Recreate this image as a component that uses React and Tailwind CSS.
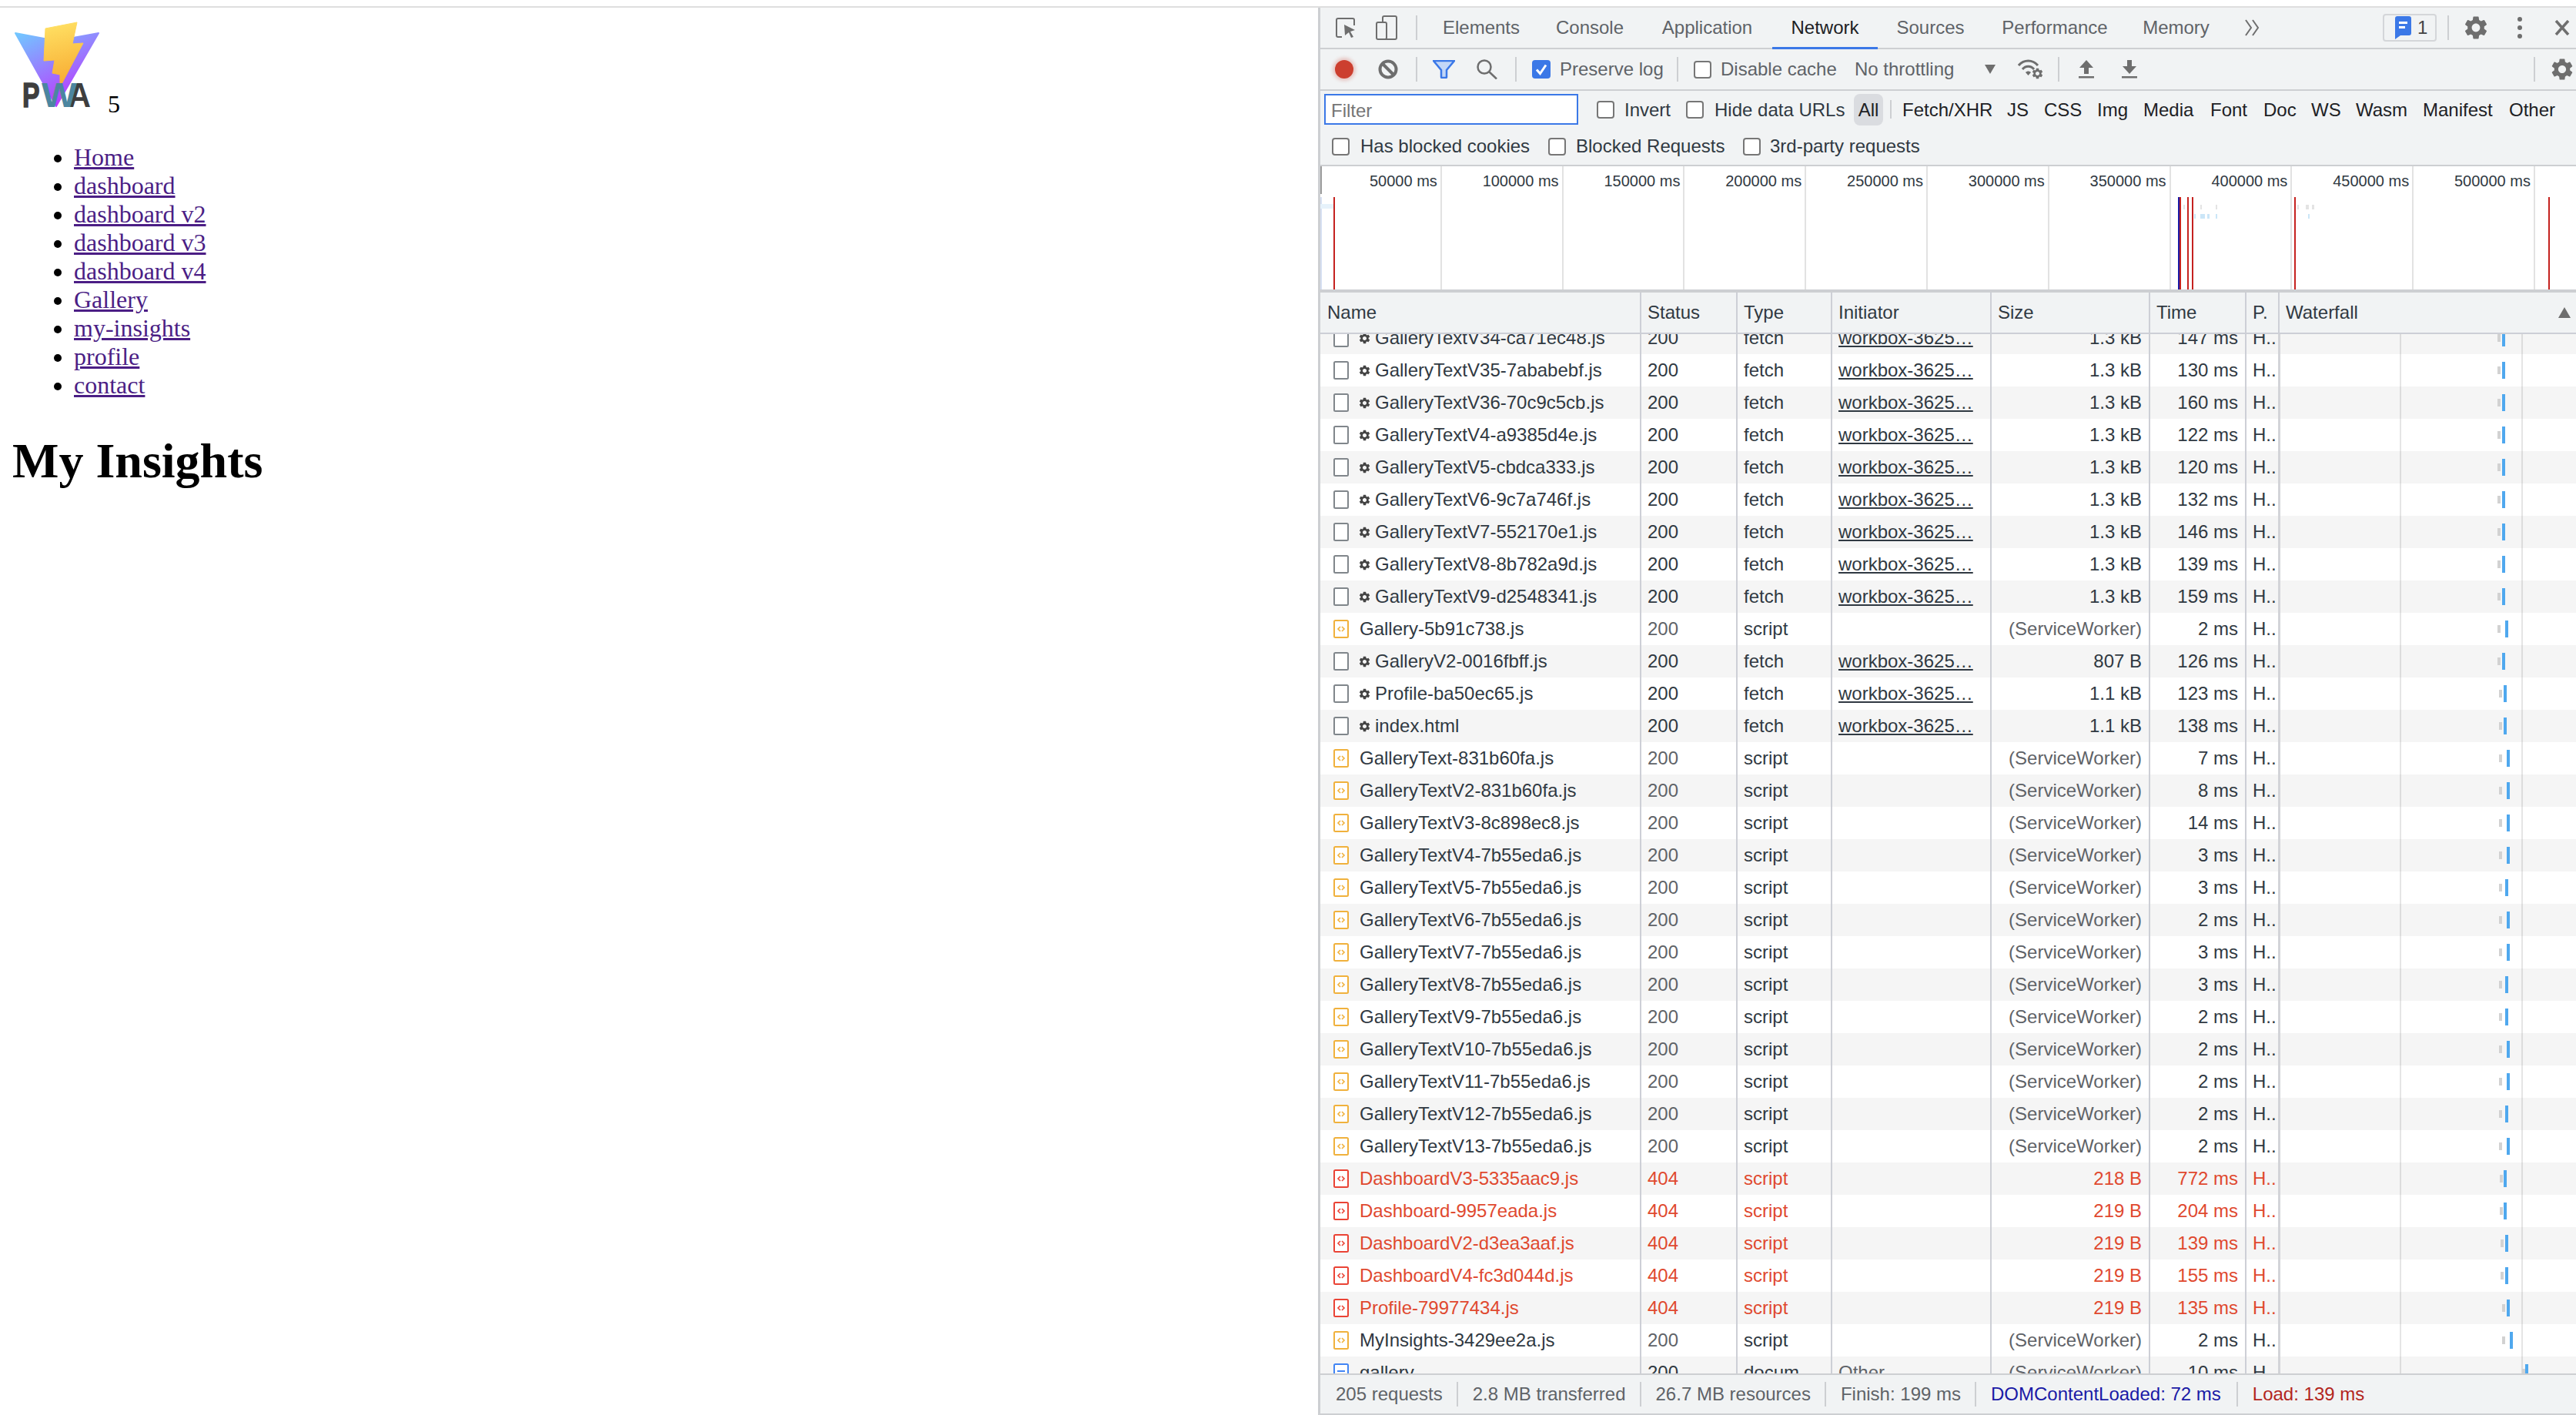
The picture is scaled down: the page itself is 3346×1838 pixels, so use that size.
import React from 'react';
import { MdSettings } from 'react-icons/md';

const COLS = 'grid grid-cols-[415px_125px_123px_207px_206px_125px_43px_1fr]';

const links = ['Home', 'dashboard', 'dashboard v2', 'dashboard v3', 'dashboard v4', 'Gallery', 'my-insights', 'profile', 'contact'];
const tabs = [
  ['Elements', 'w-[146px]'],
  ['Console', 'w-[136px]'],
  ['Application', 'w-[169px]'],
  ['Network', 'w-[137px]'],
  ['Sources', 'w-[137px]'],
  ['Performance', 'w-[186px]'],
  ['Memory', 'w-[129px]'],
];
const filters = [
  ['Fetch/XHR', 'w-[136px]'],
  ['JS', 'w-[48px]'],
  ['CSS', 'w-[69px]'],
  ['Img', 'w-[60px]'],
  ['Media', 'w-[87px]'],
  ['Font', 'w-[69px]'],
  ['Doc', 'w-[62px]'],
  ['WS', 'w-[58px]'],
  ['Wasm', 'w-[87px]'],
  ['Manifest', 'w-[112px]'],
  ['Other', 'w-[60px]'],
];
const ticks = ['50000', '100000', '150000', '200000', '250000', '300000', '350000', '400000', '450000', '500000'];

// name, kind, size, time, gray bar x, blue bar x (x measured from the waterfall column)
const fetchRow = (name, size, time, gray, blue) => ({ name, kind: 'fetch', size, time, gray, blue });
const scriptRow = (name, time, gray, blue) => ({ name, kind: 'script', size: '(ServiceWorker)', time, gray, blue });
const errRow = (name, size, time, gray, blue) => ({ name, kind: 'err', size, time, gray, blue });

const rows = [
  fetchRow('GalleryTextV34-ca71ec48.js', '1.3 kB', '147 ms', 283, 289),
  fetchRow('GalleryTextV35-7ababebf.js', '1.3 kB', '130 ms', 283, 289),
  fetchRow('GalleryTextV36-70c9c5cb.js', '1.3 kB', '160 ms', 283, 289),
  fetchRow('GalleryTextV4-a9385d4e.js', '1.3 kB', '122 ms', 283, 289),
  fetchRow('GalleryTextV5-cbdca333.js', '1.3 kB', '120 ms', 283, 289),
  fetchRow('GalleryTextV6-9c7a746f.js', '1.3 kB', '132 ms', 283, 289),
  fetchRow('GalleryTextV7-552170e1.js', '1.3 kB', '146 ms', 283, 289),
  fetchRow('GalleryTextV8-8b782a9d.js', '1.3 kB', '139 ms', 283, 289),
  fetchRow('GalleryTextV9-d2548341.js', '1.3 kB', '159 ms', 283, 289),
  scriptRow('Gallery-5b91c738.js', '2 ms', 283, 293),
  fetchRow('GalleryV2-0016fbff.js', '807 B', '126 ms', 283, 289),
  fetchRow('Profile-ba50ec65.js', '1.1 kB', '123 ms', 285, 291),
  fetchRow('index.html', '1.1 kB', '138 ms', 285, 291),
  scriptRow('GalleryText-831b60fa.js', '7 ms', 285, 295),
  scriptRow('GalleryTextV2-831b60fa.js', '8 ms', 285, 295),
  scriptRow('GalleryTextV3-8c898ec8.js', '14 ms', 285, 295),
  scriptRow('GalleryTextV4-7b55eda6.js', '3 ms', 285, 295),
  scriptRow('GalleryTextV5-7b55eda6.js', '3 ms', 285, 293),
  scriptRow('GalleryTextV6-7b55eda6.js', '2 ms', 285, 295),
  scriptRow('GalleryTextV7-7b55eda6.js', '3 ms', 285, 295),
  scriptRow('GalleryTextV8-7b55eda6.js', '3 ms', 285, 293),
  scriptRow('GalleryTextV9-7b55eda6.js', '2 ms', 285, 293),
  scriptRow('GalleryTextV10-7b55eda6.js', '2 ms', 285, 295),
  scriptRow('GalleryTextV11-7b55eda6.js', '2 ms', 285, 295),
  scriptRow('GalleryTextV12-7b55eda6.js', '2 ms', 285, 293),
  scriptRow('GalleryTextV13-7b55eda6.js', '2 ms', 285, 295),
  errRow('DashboardV3-5335aac9.js', '218 B', '772 ms', 286, 291),
  errRow('Dashboard-9957eada.js', '219 B', '204 ms', 286, 291),
  errRow('DashboardV2-d3ea3aaf.js', '219 B', '139 ms', 287, 293),
  errRow('DashboardV4-fc3d044d.js', '219 B', '155 ms', 287, 293),
  errRow('Profile-79977434.js', '219 B', '135 ms', 289, 295),
  scriptRow('MyInsights-3429ee2a.js', '2 ms', 289, 299),
  { name: 'gallery', kind: 'doc', size: '(ServiceWorker)', time: '10 ms', gray: 315, blue: 319 },
];

function Check({ on }) {
  if (on) {
    return (
      <svg viewBox="0 0 24 24" className="w-[24px] h-[24px] shrink-0">
        <rect width="24" height="24" rx="4" fill="#3b78e7" />
        <path d="M6 12.5l4.5 5L18 6.5" fill="none" stroke="#fff" strokeWidth="3" />
      </svg>
    );
  }
  return <span className="block w-[23px] h-[23px] shrink-0 rounded-[4px] border-2 border-[#767676] bg-white" />;
}

function Divider() {
  return <span className="block w-[2px] h-[32px] shrink-0 bg-[#cdcfd2]" />;
}

function SelectIcon() {
  return (
    <svg viewBox="0 0 26 26" className="w-[26px] h-[26px]" fill="none" stroke="#6e6e6e" strokeWidth="2">
      <path d="M8 25H3a2 2 0 0 1-2-2V3a2 2 0 0 1 2-2h19a2 2 0 0 1 2 2v7" />
      <path d="M11 9l14 7-6 2 4 7-3 1-3-7-5 4z" fill="#6e6e6e" stroke="none" />
    </svg>
  );
}

function DeviceIcon() {
  return (
    <svg viewBox="0 0 28 32" className="w-[28px] h-[32px]" fill="none" stroke="#6e6e6e" strokeWidth="2">
      <path d="M9 9V3a2 2 0 0 1 2-2h14a2 2 0 0 1 2 2v26a2 2 0 0 1-2 2H11" />
      <rect x="1" y="9" width="13" height="22" rx="2" />
    </svg>
  );
}

function ClearIcon() {
  return (
    <svg viewBox="0 0 26 26" className="w-[26px] h-[26px]" fill="none" stroke="#6e6e6e" strokeWidth="4">
      <circle cx="13" cy="13" r="10.5" />
      <path d="M5.5 5.5l15 15" />
    </svg>
  );
}

function FunnelIcon() {
  return (
    <svg viewBox="0 0 29 24" className="w-[29px] h-[24px]">
      <path d="M1 1h27L18 13v9a1 1 0 0 1-1 1h-5a1 1 0 0 1-1-1v-9z" fill="#c3d7f7" stroke="#3b78e7" strokeWidth="2.5" />
    </svg>
  );
}

function SearchIcon() {
  return (
    <svg viewBox="0 0 27 26" className="w-[27px] h-[26px]" fill="none" stroke="#6e6e6e" strokeWidth="2.5">
      <circle cx="10" cy="10" r="8.5" />
      <path d="M16 16l10 9.5" />
    </svg>
  );
}

function ArrowIcon({ down }) {
  return (
    <svg viewBox="0 0 20 24" className="w-[20px] h-[24px]" fill="#6e6e6e">
      {down ? <path d="M7 0h6v8h6L10 18 1 8h6z" /> : <path d="M10 0l9 10h-6v8H7v-8H1z" />}
      <rect y="21" width="20" height="2.5" />
    </svg>
  );
}

function WifiIcon() {
  return (
    <span className="relative block w-[34px] h-[27px] shrink-0">
      <svg viewBox="0 0 34 27" className="w-[34px] h-[27px]" fill="none" stroke="#6e6e6e" strokeWidth="3">
        <path d="M1 8c7-8 18-8 25 0" />
        <path d="M6 13c4-5 11-5 15 0" />
        <path d="M13.5 21l-3.5-4c2-2 5-2 7 0z" fill="#6e6e6e" stroke="none" />
      </svg>
      <MdSettings className="absolute right-0 bottom-0 text-[17px] text-[#6e6e6e]" />
    </span>
  );
}

function IssueIcon() {
  return (
    <svg viewBox="0 0 21 30" className="w-[21px] h-[30px]">
      <path d="M3 0h15a3 3 0 0 1 3 3v19a3 3 0 0 1-3 3H7l-7 5V3a3 3 0 0 1 3-3z" fill="#3b78e7" />
      <rect x="5" y="7" width="11" height="3" fill="#fff" />
      <rect x="5" y="13" width="8" height="3" fill="#fff" />
    </svg>
  );
}

function FileIcon({ kind }) {
  if (kind === 'fetch') {
    return (
      <svg viewBox="0 0 20 24" className="w-[20px] h-[24px] shrink-0">
        <rect x="1" y="1" width="18" height="22" rx="1.5" fill="#fff" stroke="#80868b" strokeWidth="2" />
      </svg>
    );
  }
  if (kind === 'doc') {
    return (
      <svg viewBox="0 0 20 24" className="w-[20px] h-[24px] shrink-0">
        <rect x="1" y="1" width="18" height="22" rx="1.5" fill="#fff" stroke="#4285f4" strokeWidth="2" />
        <rect x="5" y="9" width="10" height="2" fill="#4285f4" />
      </svg>
    );
  }
  const color = kind === 'err' ? '#ea4335' : '#f0b13c';
  return (
    <svg viewBox="0 0 20 24" className="w-[20px] h-[24px] shrink-0">
      <rect x="1" y="1" width="18" height="22" rx="1.5" fill="#fff" stroke={color} strokeWidth="2" />
      <path d="M9 9l-3 3 3 3M11 9l3 3-3 3" fill="none" stroke={color} strokeWidth="1.6" />
    </svg>
  );
}

function Row({ row, striped }) {
  const err = row.kind === 'err';
  const main = err ? 'text-[#e0492f]' : 'text-[#303942]';
  const cell = 'border-l-2 border-[#cdcfd6] flex items-center overflow-hidden whitespace-nowrap';
  const isFetch = row.kind === 'fetch';
  const statusColor = row.kind === 'script' ? 'text-[#5f6368]' : main;

  return (
    <div className={`${COLS} h-[42px] ${striped ? 'bg-[#f5f5f5]' : 'bg-white'} ${main}`}>
      <div className="flex items-center pl-[17px] whitespace-nowrap overflow-hidden">
        <FileIcon kind={row.kind} />
        {isFetch && <MdSettings className="ml-[12px] mr-[5px] text-[17px] text-[#444] shrink-0" />}
        <span className={isFetch ? '' : 'ml-[14px]'}>{row.name}</span>
      </div>
      <div className={`${cell} pl-[8px] ${statusColor}`}>{err ? '404' : '200'}</div>
      <div className={`${cell} pl-[8px]`}>{row.kind === 'doc' ? 'docum.' : isFetch ? 'fetch' : 'script'}</div>
      <div className={`${cell} pl-[8px]`}>
        {isFetch && <span className="underline">workbox-3625…</span>}
        {row.kind === 'doc' && <span className="text-[#5f6368]">Other</span>}
      </div>
      <div className={`${cell} justify-end pr-[9px] ${row.size.startsWith('(') ? 'text-[#5f6368]' : ''}`}>{row.size}</div>
      <div className={`${cell} justify-end pr-[9px]`}>{row.time}</div>
      <div className={`${cell} pl-[8px]`}>H..</div>
      <div className="relative flex items-center border-l-[3px] border-[#d3d4d8]">
        <span className="absolute left-[155px] top-0 bottom-0 w-[2px] bg-black/10" />
        <span className="absolute left-[313px] top-0 bottom-0 w-[2px] bg-black/10" />
        <span className="absolute w-[4px] h-[10px] bg-[#d2d2d2]" style={{ left: row.gray - 1 }} />
        <span className="absolute w-[4px] h-[22px] bg-[#4fa8ee]" style={{ left: row.blue - 1 }} />
      </div>
    </div>
  );
}

function Logo() {
  return (
    <svg viewBox="0 0 116 120" className="inline w-[116px] h-[120px] align-baseline">
      <defs>
        <linearGradient id="tri" x1="0.05" y1="0" x2="0.6" y2="1">
          <stop offset="0" stopColor="#72c6ff" />
          <stop offset="1" stopColor="#bd34fe" />
        </linearGradient>
        <linearGradient id="bolt" x1="0.45" y1="0" x2="0.6" y2="1">
          <stop offset="0" stopColor="#ffdf62" />
          <stop offset="1" stopColor="#f7a82f" />
        </linearGradient>
      </defs>
      <path d="M4 17L57 27L112 17L57 112z" fill="url(#tri)" stroke="url(#tri)" strokeWidth="2" strokeLinejoin="round" />
      <path d="M43 11L84 3L78 31L92 30L62 87L62 71L52 69L55 52L41 53z" fill="url(#bolt)" stroke="url(#bolt)" strokeWidth="1" strokeLinejoin="round" />
      <g fontFamily="'Liberation Sans', sans-serif" fontWeight="700" fontSize="45">
        <text transform="translate(13 113) scale(0.75 1)" fill="#3e3e3e" stroke="#3e3e3e" strokeWidth="1.5">P</text>
        <text x="72" y="113" fill="#3e3e3e" textLength="30" lengthAdjust="spacingAndGlyphs">A</text>
        <text x="38" y="113" fill="#4c86a0" textLength="46" lengthAdjust="spacingAndGlyphs">W</text>
      </g>
    </svg>
  );
}

function Page() {
  return (
    <div className="w-[1712px] shrink-0 pt-4 pl-4 font-['Liberation_Serif',serif] text-[32px] leading-[37px] text-black">
      <div>
        <Logo /> 5
      </div>
      <ul className="list-disc pl-[80px] mt-[32px]">
        {links.map((link) => (
          <li key={link}>
            <a className="text-[#4b1e85] underline" href="#">{link}</a>
          </li>
        ))}
      </ul>
      <h1 className="mt-[43px] text-[64px] leading-[74px] font-bold">My Insights</h1>
    </div>
  );
}

function MainToolbar() {
  return (
    <div className="h-[54px] shrink-0 flex items-center bg-[#f1f3f4] border-b-2 border-[#cdcfd2] text-[#5f6368]">
      <span className="ml-[20px]"><SelectIcon /></span>
      <span className="ml-[26px]"><DeviceIcon /></span>
      <span className="ml-[24px]"><Divider /></span>
      <div className="flex self-stretch ml-[10px]">
        {tabs.map(([name, width]) => (
          <div
            key={name}
            className={`${width} flex items-center justify-center border-b-[3px] -mb-[2px] ${name === 'Network' ? 'border-[#3b78e7] text-[#202124]' : 'border-transparent'}`}
          >
            {name}
          </div>
        ))}
      </div>
      <svg viewBox="0 0 20 24" className="w-[20px] h-[24px] ml-[24px]" fill="none" stroke="#6e6e6e" strokeWidth="2">
        <path d="M2 2l7 10-7 10M11 2l7 10-7 10" />
      </svg>
      <div className="ml-[160px] w-[70px] h-[36px] flex items-center pl-[14px] gap-[8px] border-2 border-[#d4d6d9] rounded-[4px]">
        <IssueIcon />
        <span className="text-[#444]">1</span>
      </div>
      <span className="ml-[14px]"><Divider /></span>
      <MdSettings className="ml-[17px] text-[36px] text-[#6e6e6e]" />
      <svg viewBox="0 0 6 28" className="ml-[36px] w-[6px] h-[28px]" fill="#6e6e6e">
        <circle cx="3" cy="3" r="3" />
        <circle cx="3" cy="14" r="3" />
        <circle cx="3" cy="25" r="3" />
      </svg>
      <svg viewBox="0 0 20 20" className="ml-[42px] w-[20px] h-[20px]" fill="none" stroke="#6e6e6e" strokeWidth="3.5">
        <path d="M2 1l16 18M18 1L2 19" />
      </svg>
    </div>
  );
}

function NetworkToolbar() {
  return (
    <div className="h-[54px] shrink-0 flex items-center bg-[#f1f3f4] border-b-2 border-[#cdcfd2] text-[#5f6368] whitespace-nowrap overflow-hidden">
      <span className="ml-[19px] w-[24px] h-[24px] rounded-full bg-[#cc3f2f] shadow-[0_0_4px_3px_rgba(204,63,47,0.25)]" />
      <span className="ml-[32px]"><ClearIcon /></span>
      <span className="ml-[23px]"><Divider /></span>
      <span className="ml-[20px]"><FunnelIcon /></span>
      <span className="ml-[28px]"><SearchIcon /></span>
      <span className="ml-[23px]"><Divider /></span>
      <span className="ml-[20px]"><Check on /></span>
      <span className="ml-[12px] w-[152px]">Preserve log</span>
      <Divider />
      <span className="ml-[20px]"><Check /></span>
      <span className="ml-[12px] w-[174px]">Disable cache</span>
      <span className="w-[169px]">No throttling</span>
      <svg viewBox="0 0 14 12" className="w-[14px] h-[12px]" fill="#6e6e6e"><path d="M0 0h14L7 12z" /></svg>
      <span className="ml-[29px]"><WifiIcon /></span>
      <span className="ml-[18px]"><Divider /></span>
      <span className="ml-[25px]"><ArrowIcon /></span>
      <span className="ml-[36px]"><ArrowIcon down /></span>
      <span className="ml-[515px]"><Divider /></span>
      <MdSettings className="ml-[18px] text-[34px] text-[#6e6e6e] shrink-0" />
    </div>
  );
}

function FilterBar() {
  return (
    <div className="h-[98px] shrink-0 bg-[#f1f3f4] border-b-2 border-[#cdcfd2] whitespace-nowrap overflow-hidden">
      <div className="h-[48px] flex items-center text-[#303942]">
        <div className="ml-[5px] w-[330px] h-[40px] flex items-center pl-[7px] pt-[3px] bg-white border-2 border-[#3b78e7] text-[#757575]">
          Filter
        </div>
        <span className="ml-[24px]"><Check /></span>
        <span className="ml-[13px] w-[80px] pt-[2px]">Invert</span>
        <Check />
        <span className="ml-[14px] w-[181px] pt-[2px]">Hide data URLs</span>
        <span className="h-[41px] w-[38px] flex items-center justify-center pt-[2px] rounded-[8px] bg-[#dadce0] text-[#202124]">All</span>
        <span className="ml-[9px] mr-[14px] w-[2px] h-[24px] bg-[#cdcfd2]" />
        {filters.map(([name, width]) => (
          <span key={name} className={`${width} pt-[2px] text-[#202124]`}>{name}</span>
        ))}
      </div>
      <div className="h-[48px] flex items-center text-[#303942]">
        <span className="ml-[15px]"><Check /></span>
        <span className="ml-[14px] w-[244px]">Has blocked cookies</span>
        <Check />
        <span className="ml-[13px] w-[217px]">Blocked Requests</span>
        <Check />
        <span className="ml-[12px]">3rd-party requests</span>
      </div>
    </div>
  );
}

function Overview() {
  return (
    <div className="relative h-[164px] shrink-0 bg-white border-b-4 border-[#cdcfd2] flex text-[20px] leading-[28px] text-[#303942]">
      {ticks.map((tick) => (
        <div key={tick} className="w-[157.8px] h-full shrink-0 border-r-2 border-[#e2e2e2] pt-[5px] pr-[4px] text-right whitespace-nowrap">
          {tick} ms
        </div>
      ))}
      {/* marks sit over the tick columns, x is measured from the devtools content edge */}
      <svg viewBox="0 0 1631 160" className="absolute inset-0 w-[1631px] h-[160px]">
        <rect x="-1" y="0" width="3" height="36" fill="#9c9c9c" />
        <rect x="0" y="40" width="2" height="120" fill="#d6dff2" />
        <rect x="0" y="49" width="18" height="6" fill="#e6f2fb" />
        <rect x="17" y="40" width="2" height="120" fill="#c5221f" />
        <rect x="1114" y="40" width="2" height="120" fill="#1a1aa6" />
        <rect x="1116" y="40" width="2" height="120" fill="#c5221f" />
        <rect x="1126" y="40" width="2" height="120" fill="#c5221f" />
        <rect x="1132" y="40" width="2" height="120" fill="#c5221f" />
        <rect x="1265" y="40" width="2" height="120" fill="#c5221f" />
        <rect x="1595" y="40" width="2" height="120" fill="#c5221f" />
        <g fill="#e4e4e4">
          <rect x="1121" y="50" width="2" height="6" />
          <rect x="1143" y="50" width="2" height="6" />
          <rect x="1163" y="50" width="2" height="6" />
          <rect x="1269" y="50" width="2" height="6" />
          <rect x="1280" y="50" width="4" height="6" />
          <rect x="1288" y="50" width="3" height="6" />
        </g>
        <g fill="#cbe6f8">
          <rect x="1135" y="62" width="2" height="6" />
          <rect x="1143" y="62" width="6" height="6" />
          <rect x="1152" y="62" width="3" height="6" />
          <rect x="1163" y="62" width="2" height="6" />
          <rect x="1283" y="62" width="2" height="6" />
        </g>
      </svg>
    </div>
  );
}

function TableHeader() {
  const cell = 'border-l-2 border-[#cdcfd6] flex items-center pl-[8px]';
  return (
    <div className={`${COLS} h-[54px] shrink-0 bg-[#f1f3f4] border-b-2 border-[#cdcfd6] text-[#303942]`}>
      <div className="flex items-center pl-[9px]">Name</div>
      <div className={cell}>Status</div>
      <div className={cell}>Type</div>
      <div className={cell}>Initiator</div>
      <div className={cell}>Size</div>
      <div className={cell}>Time</div>
      <div className={cell}>P.</div>
      <div className={`${cell} justify-between pr-[7px]`}>
        Waterfall
        <svg viewBox="0 0 16 14" className="w-[16px] h-[14px]" fill="#6e6e6e"><path d="M8 0l8 14H0z" /></svg>
      </div>
    </div>
  );
}

function StatusBar() {
  const seg = 'pr-[18px] mr-[19px] border-r-2 border-[#cdcfd2] h-[32px] flex items-center';
  return (
    <div className="h-[54px] shrink-0 flex items-center pl-[20px] bg-[#f1f3f4] border-y-2 border-[#cdcfd2] text-[#5f6368] whitespace-nowrap">
      <span className={seg}>205 requests</span>
      <span className={seg}>2.8 MB transferred</span>
      <span className={seg}>26.7 MB resources</span>
      <span className={seg}>Finish: 199 ms</span>
      <span className={`${seg} pr-[20px] text-[#1a1aa6]`}>DOMContentLoaded: 72 ms</span>
      <span className="text-[#b3261e]">Load: 139 ms</span>
    </div>
  );
}

export default function App() {
  return (
    <div className="w-[3346px] h-[1838px] overflow-hidden bg-white">
      <div className="h-[10px] border-b-2 border-[#dedede]" />
      <div className="flex h-[1828px]">
        <Page />
        <div className="flex-1 min-w-0 flex flex-col border-l-[3px] border-[#cdcfd2] font-['Liberation_Sans',sans-serif] text-[24px] leading-[28px]">
          <MainToolbar />
          <NetworkToolbar />
          <FilterBar />
          <Overview />
          <TableHeader />
          <div className="flex-1 min-h-0 overflow-hidden">
            <div className="-mt-[16px]">
              {rows.map((row, i) => (
                <Row key={row.name} row={row} striped={i % 2 === 0} />
              ))}
            </div>
          </div>
          <StatusBar />
        </div>
      </div>
    </div>
  );
}
